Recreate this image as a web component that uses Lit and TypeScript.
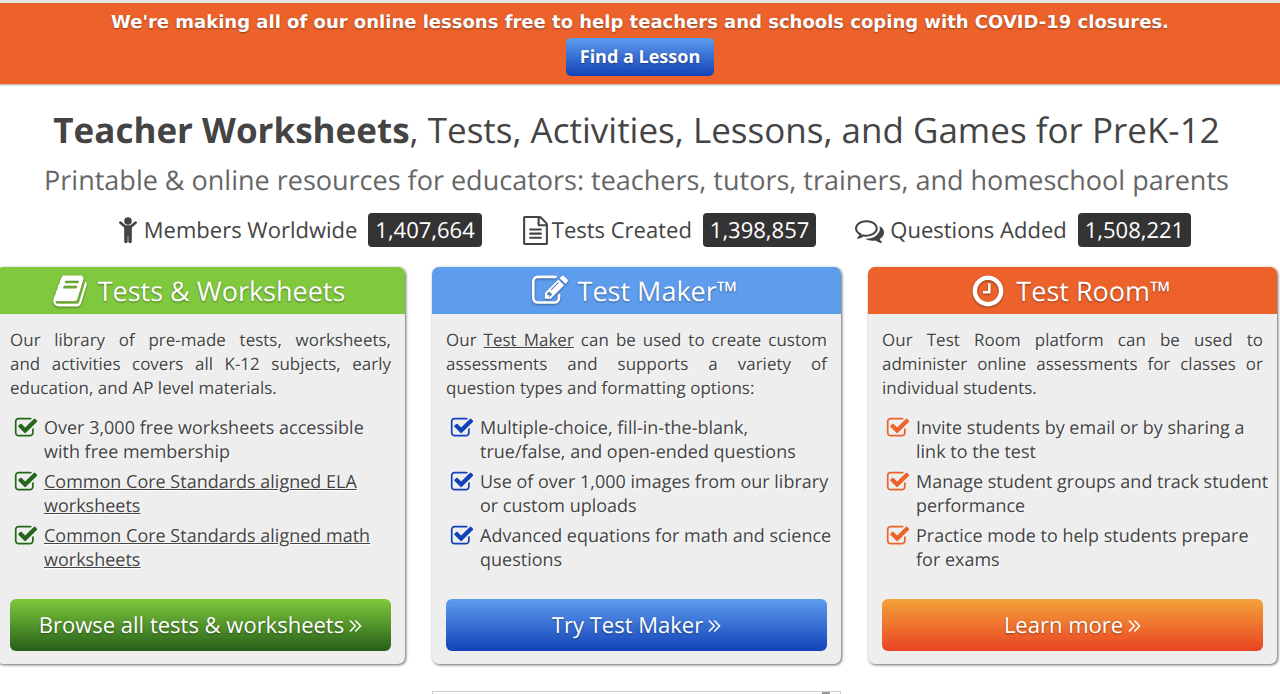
import { LitElement, html, css, svg } from "lit";
import { customElement } from "lit/decorators.js";

const paths: Record<string, string> = {
  check: "M1472 930v318q0 119-84.5 203.5t-203.5 84.5h-832q-119 0-203.5-84.5t-84.5-203.5v-832q0-119 84.5-203.5t203.5-84.5h832q63 0 117 25 15 7 18 23 3 17-9 29l-49 49q-10 10-23 10-3 0-9-2-23-6-45-6h-832q-66 0-113 47t-47 113v832q0 66 47 113t113 47h832q66 0 113-47t47-113v-254q0-13 9-22l64-64q10-10 23-10 6 0 12 3 20 8 20 29zm231-489l-814 814q-24 24-57 24t-57-24l-430-430q-24-24-24-57t24-57l110-110q24-24 57-24t57 24l263 263 647-647q24-24 57-24t57 24l110 110q24 24 24 57t-24 57z",
  book: "M1703 478q40 57 18 129l-275 906q-19 64-76.5 107.5t-122.5 43.5h-923q-77 0-148.5-53.5t-99.5-131.5q-24-67-2-127 0-4 3-27t4-37q1-8-3-21.5t-3-19.5q2-11 8-21t16.5-23.5 16.5-23.5q23-38 45-91.5t30-91.5q3-10 .5-30t-.5-28q3-11 17-28t17-23q21-36 42-92t25-90q1-9-2.5-32t.5-28q4-13 22-30.5t22-22.5q19-26 42.5-84.5t27.5-96.5q1-8-3-25.5t-2-26.5q2-8 9-18t18-23 17-21q8-12 16.5-30.5t15-35 16-36 19.5-32 26.5-23.5 36-11.5 47.5 5.5l-1 3q38-9 51-9h761q74 0 114 56t18 130l-274 906q-36 119-71.5 153.5t-128.5 34.5h-869q-27 0-38 15-11 16-1 43 24 70 144 70h923q29 0 56-15.5t35-41.5l300-987q7-22 5-57 38 15 59 43zm-1064 2q-4 13 2 22.5t20 9.5h608q13 0 25.5-9.5t16.5-22.5l21-64q4-13-2-22.5t-20-9.5h-608q-13 0-25.5 9.5t-16.5 22.5zm-83 256q-4 13 2 22.5t20 9.5h608q13 0 25.5-9.5t16.5-22.5l21-64q4-13-2-22.5t-20-9.5h-608q-13 0-25.5 9.5t-16.5 22.5z",
  pencil: "M888 1184l116-116-152-152-116 116v56h96v96h56zm440-720q-16-16-33 1l-350 350q-17 17-1 33t33-1l350-350q17-17 1-33zm80 594v190q0 119-84.5 203.5t-203.5 84.5h-832q-119 0-203.5-84.5t-84.5-203.5v-832q0-119 84.5-203.5t203.5-84.5h832q63 0 117 25 15 7 18 23 3 17-9 29l-49 49q-14 14-32 8-23-6-45-6h-832q-66 0-113 47t-47 113v832q0 66 47 113t113 47h832q66 0 113-47t47-113v-126q0-13 9-22l64-64q15-15 35-7t20 29zm-96-738l288 288-672 672h-288v-288zm444 132l-92 92-288-288 92-92q28-28 68-28t68 28l152 152q28 28 28 68t-28 68z",
  clock: "M1024 544v448q0 14-9 23t-23 9h-320q-14 0-23-9t-9-23v-64q0-14 9-23t23-9h224v-352q0-14 9-23t23-9h64q14 0 23 9t9 23zm416 352q0-148-73-273t-198-198-273-73-273 73-198 198-73 273 73 273 198 198 273 73 273-73 198-198 73-273zm224 0q0 209-103 385.5t-279.5 279.5-385.5 103-385.5-103-279.5-279.5-103-385.5 103-385.5 279.5-279.5 385.5-103 385.5 103 279.5 279.5 103 385.5z",
  comments: "M704 384q-153 0-286 52t-211.5 141-78.5 191q0 82 53 158t149 132l97 56-35 84q34-20 62-39l44-31 53 10q78 14 153 14 153 0 286-52t211.5-141 78.5-191-78.5-191-211.5-141-286-52zm0-128q191 0 353.5 68.5t256.5 186.5 94 257-94 257-256.5 186.5-353.5 68.5q-86 0-176-16-124 88-278 128-36 9-86 16h-3q-11 0-20.5-8t-11.5-21q-1-3-1-6.5t.5-6.5 2-6l2.5-5t3.5-5.5 4-5 4.5-5 4-4.5q5-6 23-25t26-29.5 22.5-29 25-38.5 20.5-44q-124-72-195-177t-71-224q0-139 94-257t256.5-186.5 353.5-68.5zm822 1169q10 24 20.5 44t25 38.5 22.5 29 26 29.5 23 25q1 1 4 4.5t4.5 5 4 5 3.5 5.5l2.5 5t2 6 .5 6.5-1 6.5q-3 14-13 22t-22 7q-50-7-86-16-154-40-278-128-90 16-176 16-271 0-472-132 58 4 88 4 161 0 309-45t264-129q125-92 192-212t67-254q0-77-23-152 129 71 204 178t75 230q0 120-71 224.5t-195 176.5z",
  file: "M1596 380q28 28 48 76t20 88v1152q0 40-28 68t-68 28h-1344q-40 0-68-28t-28-68v-1600q0-40 28-68t68-28h896q40 0 88 20t76 48zm-444-244v376h376q-10-29-22-41l-313-313q-12-12-41-22zm384 1528v-1024h-416q-40 0-68-28t-28-68v-416h-768v1536h1280zm-1024-864q0-14 9-23t23-9h704q14 0 23 9t9 23v64q0 14-9 23t-23 9h-704q-14 0-23-9t-9-23v-64zm736 224q14 0 23 9t9 23v64q0 14-9 23t-23 9h-704q-14 0-23-9t-9-23v-64q0-14 9-23t23-9h704zm0 256q14 0 23 9t9 23v64q0 14-9 23t-23 9h-704q-14 0-23-9t-9-23v-64q0-14 9-23t23-9h704z",
};

const icon = (name: string, cls: string) => html`
  <svg class=${cls} viewBox="0 0 1792 1792" fill="currentColor" aria-hidden="true">
    ${svg`<path d=${paths[name]}></path>`}
  </svg>`;

const child = html`
  <svg class="stat-icon child" viewBox="0 0 20 29" aria-hidden="true" fill="currentColor">
    <circle cx="10" cy="5" r="3.8"></circle>
    <path d="M2.3 6.6 7 10.6h6l4.7-4" fill="none" stroke="currentColor" stroke-width="2.6" stroke-linecap="round" stroke-linejoin="round"></path>
    <path d="M6.2 10h7.6v15.8a1.8 1.8 0 0 1-3.5 0v-5.6h-.6v5.6a1.8 1.8 0 0 1-3.5 0z"></path>
  </svg>`;

const chevrons = html`
  <svg class="chevrons" viewBox="0 0 13 14" aria-hidden="true" fill="none" stroke="currentColor" stroke-width="1.5">
    <path d="M1 1.5 6.3 7 1 12.5M6.3 1.5 11.6 7l-5.3 5.5"></path>
  </svg>`;

const stats = [
  { icon: child, label: "Members Worldwide", value: "1,407,664" },
  { icon: icon("file", "stat-icon"), label: "Tests Created", value: "1,398,857" },
  { icon: icon("comments", "stat-icon wide"), label: "Questions Added", value: "1,508,221" },
];

const cards = [
  {
    theme: "green",
    icon: "book",
    title: "Tests & Worksheets",
    intro: html`Our library of pre-made tests, worksheets, and&nbsp;activities covers all K-12 subjects, early education, and AP level materials.`,
    items: [
      html`Over 3,000 free worksheets accessible with free membership`,
      html`<a href="#ela">Common Core Standards aligned ELA worksheets</a>`,
      html`<a href="#math">Common Core Standards aligned math worksheets</a>`,
    ],
    action: "Browse all tests & worksheets",
  },
  {
    theme: "blue",
    icon: "pencil",
    title: "Test Maker™",
    intro: html`Our <a href="#maker">Test Maker</a> can be used to create custom assessments and supports a variety of question&nbsp;types and formatting options:`,
    items: [
      html`Multiple-choice, fill-in-the-blank, true/false, and open-ended questions`,
      html`Use of over 1,000 images from our library or custom uploads`,
      html`Advanced equations for math and science questions`,
    ],
    action: "Try Test Maker",
  },
  {
    theme: "orange",
    icon: "clock",
    title: "Test Room™",
    intro: html`Our Test Room platform can be used to administer online assessments for classes or individual students.`,
    items: [
      html`Invite students by email or by sharing a link to the test`,
      html`Manage student groups and track student performance`,
      html`Practice mode to help students prepare for exams`,
    ],
    action: "Learn more",
  },
];

@customElement("app-root")
export class AppRoot extends LitElement {
  static styles = css`
    :host {
      display: block;
      height: 100vh;
      overflow: hidden;
      background: #fff;
      color: #444;
      font-family: "Open Sans", "Noto Sans", sans-serif;
      font-size: 18px;
      line-height: 24px;
      text-rendering: geometricPrecision;
    }
    a { color: inherit; }
    .banner {
      display: flex;
      flex-direction: column;
      align-items: center;
      gap: 3px;
      padding: 8px 0;
      border-top: 3px solid #e4e6e6;
      border-bottom: 1px solid #d5bcb4;
      background: #ed622b;
      box-shadow: 0 1px 1px #e4e4e4;
      color: #fff;
    }
    .notice {
      margin: 0;
      font-family: Verdana, "DejaVu Sans", sans-serif;
      font-size: 18px;
      font-weight: 700;
      text-shadow: 0 1px 2px #0006;
      white-space: nowrap;
    }
    .find {
      padding: 7px 14px;
      border-radius: 5px;
      background: linear-gradient(#5e9cee, #1242b8);
      color: #fff;
      font-size: 18px;
      font-weight: 700;
      text-decoration: none;
      text-shadow: 0 1px 2px #0006;
    }
    .page { margin: 0 3px 0 -4px; }
    h1 {
      margin: 20px 0 0;
      font-size: 35px;
      font-weight: 400;
      line-height: 52px;
      text-align: center;
      white-space: nowrap;
    }
    .tagline {
      margin: 0;
      color: #666;
      font-size: 27px;
      line-height: 46px;
      text-align: center;
      white-space: nowrap;
    }
    .stats {
      display: flex;
      justify-content: center;
      gap: 39px;
      margin: 10px 0 20px;
      padding: 0 0 0 36px;
      list-style: none;
      font-size: 22px;
      line-height: 34px;
      white-space: nowrap;
    }
    .stat { display: flex; align-items: center; }
    .stat-icon { width: 29px; height: 29px; margin-right: 2px; }
    .stat-icon.child { width: 20px; margin-right: 6px; }
    .stat-icon.wide { margin-right: 6px; }
    .count {
      margin-left: 11px;
      padding: 0 7px;
      border-radius: 4px;
      background: #333;
      color: #fff;
    }
    .cards {
      display: grid;
      grid-template-columns: repeat(3, 1fr);
      gap: 27px;
    }
    .card {
      display: flex;
      flex-direction: column;
      border-radius: 7px;
      background: #eee;
      box-shadow: 1px 1px 3px #0009;
      overflow: hidden;
      text-shadow: 1px 1px 1px #fff;
    }
    .card-title {
      display: flex;
      align-items: center;
      justify-content: center;
      gap: 10px;
      margin: 0;
      padding-right: 4px;
      background: var(--top);
      color: #fff;
      font-size: 27px;
      font-weight: 400;
      line-height: 47px;
      text-shadow: 0 1px 2px #0006;
    }
    .title-icon {
      width: 36px;
      height: 36px;
      filter: drop-shadow(0 1px 1px #0006);
    }
    .green { --top: #80c83d; --mark: #24661a; --button: linear-gradient(#80c83d, #265f19); }
    .blue { --top: #5e9cee; --mark: #1242b8; --button: linear-gradient(#5e9cee, #1242b8); }
    .orange { --top: #ed622b; --mark: #ed622b; --button: linear-gradient(#f3a239, #ea4423); }
    .card-body {
      display: flex;
      flex: 1;
      flex-direction: column;
      padding: 14px 14px 13px;
    }
    .intro { margin: 0; font-size: 17px; text-align: justify; }
    .points {
      display: grid;
      gap: 6px;
      margin: 16px -10px 27px 0;
      padding: 0;
      list-style: none;
    }
    .point { display: flex; gap: 6px; padding-left: 4px; }
    .mark { flex: none; width: 24px; height: 24px; color: var(--mark); }
    .action {
      display: flex;
      align-items: center;
      justify-content: center;
      gap: 5px;
      margin-top: auto;
      border-radius: 6px;
      background: var(--button);
      color: #fff;
      font-size: 22px;
      line-height: 52px;
      text-decoration: none;
      text-shadow: 0 1px 2px #0006;
    }
    .chevrons { width: 13px; height: 14px; margin-top: 2px; }
    .below {
      display: grid;
      grid-template-columns: repeat(3, 1fr);
      gap: 27px;
      margin-top: 27px;
    }
    .ad {
      display: flex;
      grid-column: 2;
      justify-content: flex-end;
      height: 90px;
      padding-right: 10px;
      border: 1px solid #ccc;
    }
    .ad-mark { width: 8px; height: 2px; background: #999; }
  `;

  render() {
    return html`
      <header class="banner">
        <p class="notice">We're making all of our online lessons free to help teachers and schools coping with COVID-19 closures.</p>
        <a class="find" href="#lessons">Find a Lesson</a>
      </header>
      <main class="page">
        <h1><strong>Teacher Worksheets</strong>, Tests, Activities, Lessons, and Games for PreK-12</h1>
        <p class="tagline">Printable &amp; online resources for educators: teachers, tutors, trainers, and homeschool parents</p>
        <ul class="stats">
          ${stats.map((s) => html`<li class="stat">${s.icon}<span>${s.label}</span><span class="count">${s.value}</span></li>`)}
        </ul>
        <div class="cards">
          ${cards.map((c) => html`
            <section class="card ${c.theme}">
              <h2 class="card-title">${icon(c.icon, "title-icon")}<span>${c.title}</span></h2>
              <div class="card-body">
                <p class="intro">${c.intro}</p>
                <ul class="points">
                  ${c.items.map((i) => html`<li class="point">${icon("check", "mark")}<span>${i}</span></li>`)}
                </ul>
                <a class="action" href="#${c.theme}"><span>${c.action}</span>${chevrons}</a>
              </div>
            </section>`)}
        </div>
        <div class="below"><div class="ad"><span class="ad-mark"></span></div></div>
      </main>
    `;
  }
}
